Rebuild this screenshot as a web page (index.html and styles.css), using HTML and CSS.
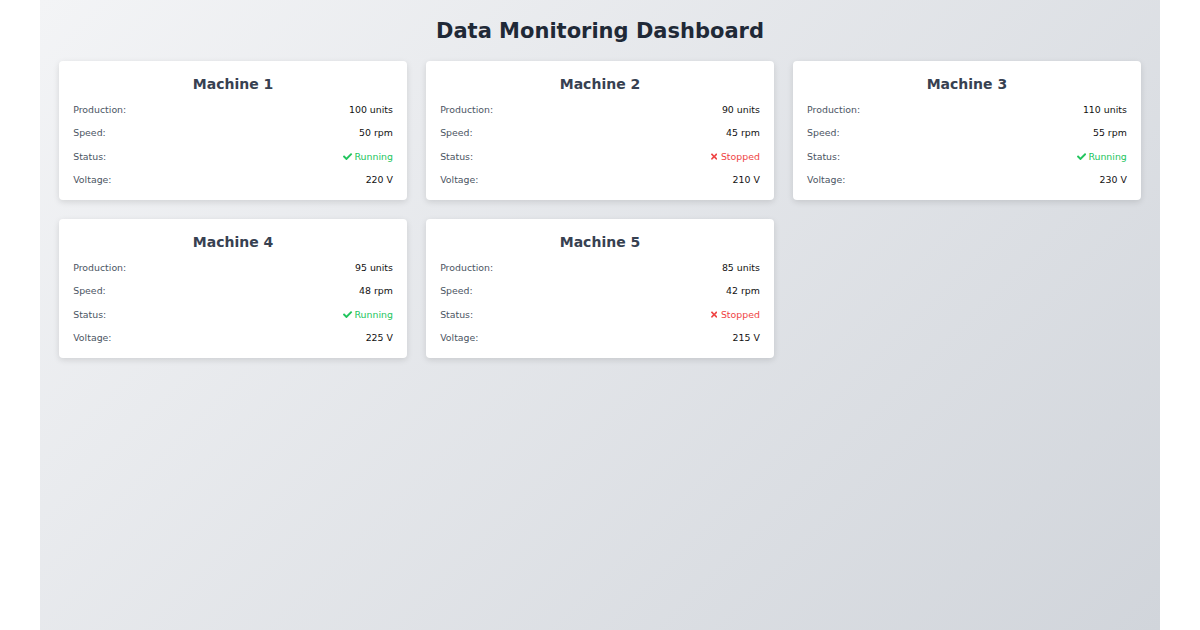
FILE: index.html
```html
<!DOCTYPE html>
<html lang="en">
<head>
<meta charset="utf-8">
<title>Data Monitoring Dashboard</title>
<link rel="stylesheet" href="styles.css">
</head>
<body>
<div class="dashboard">
  <h1 class="page-title">Data Monitoring Dashboard</h1>
  <div class="grid">
    <div class="card">
      <h2 class="card-title">Machine 1</h2>
      <div class="row"><span class="label">Production:</span><span class="value">100 units</span></div>
      <div class="row"><span class="label">Speed:</span><span class="value">50 rpm</span></div>
      <div class="row"><span class="label">Status:</span><span class="value running"><svg class="ic-check" viewBox="0 0 512 512"><path d="M173.898 439.404l-166.4-166.4c-9.997-9.997-9.997-26.206 0-36.204l36.203-36.204c9.997-9.998 26.207-9.998 36.204 0L192 312.69 432.095 72.596c9.997-9.997 26.207-9.997 36.204 0l36.203 36.204c9.997 9.997 9.997 26.206 0 36.204l-294.4 294.401c-9.998 9.997-26.207 9.997-36.204-.001z"/></svg>Running</span></div>
      <div class="row"><span class="label">Voltage:</span><span class="value">220 V</span></div>
    </div>
    <div class="card">
      <h2 class="card-title">Machine 2</h2>
      <div class="row"><span class="label">Production:</span><span class="value">90 units</span></div>
      <div class="row"><span class="label">Speed:</span><span class="value">45 rpm</span></div>
      <div class="row"><span class="label">Status:</span><span class="value stopped"><svg class="ic-times" viewBox="0 0 352 512"><path d="M242.72 256l100.07-100.07c12.28-12.28 12.28-32.19 0-44.48l-22.24-22.24c-12.28-12.28-32.19-12.28-44.48 0L176 189.28 75.93 89.21c-12.28-12.28-32.190-12.28-44.48 0L9.21 111.45c-12.28 12.28-12.28 32.19 0 44.48L109.28 256 9.21 356.07c-12.28 12.28-12.28 32.19 0 44.48l22.24 22.24c12.28 12.28 32.2 12.28 44.48 0L176 322.72l100.07 100.07c12.28 12.28 32.2 12.28 44.48 0l22.24-22.24c12.28-12.28 12.28-32.19 0-44.48L242.72 256z"/></svg>Stopped</span></div>
      <div class="row"><span class="label">Voltage:</span><span class="value">210 V</span></div>
    </div>
    <div class="card">
      <h2 class="card-title">Machine 3</h2>
      <div class="row"><span class="label">Production:</span><span class="value">110 units</span></div>
      <div class="row"><span class="label">Speed:</span><span class="value">55 rpm</span></div>
      <div class="row"><span class="label">Status:</span><span class="value running"><svg class="ic-check" viewBox="0 0 512 512"><path d="M173.898 439.404l-166.4-166.4c-9.997-9.997-9.997-26.206 0-36.204l36.203-36.204c9.997-9.998 26.207-9.998 36.204 0L192 312.69 432.095 72.596c9.997-9.997 26.207-9.997 36.204 0l36.203 36.204c9.997 9.997 9.997 26.206 0 36.204l-294.4 294.401c-9.998 9.997-26.207 9.997-36.204-.001z"/></svg>Running</span></div>
      <div class="row"><span class="label">Voltage:</span><span class="value">230 V</span></div>
    </div>
    <div class="card">
      <h2 class="card-title">Machine 4</h2>
      <div class="row"><span class="label">Production:</span><span class="value">95 units</span></div>
      <div class="row"><span class="label">Speed:</span><span class="value">48 rpm</span></div>
      <div class="row"><span class="label">Status:</span><span class="value running"><svg class="ic-check" viewBox="0 0 512 512"><path d="M173.898 439.404l-166.4-166.4c-9.997-9.997-9.997-26.206 0-36.204l36.203-36.204c9.997-9.998 26.207-9.998 36.204 0L192 312.69 432.095 72.596c9.997-9.997 26.207-9.997 36.204 0l36.203 36.204c9.997 9.997 9.997 26.206 0 36.204l-294.4 294.401c-9.998 9.997-26.207 9.997-36.204-.001z"/></svg>Running</span></div>
      <div class="row"><span class="label">Voltage:</span><span class="value">225 V</span></div>
    </div>
    <div class="card">
      <h2 class="card-title">Machine 5</h2>
      <div class="row"><span class="label">Production:</span><span class="value">85 units</span></div>
      <div class="row"><span class="label">Speed:</span><span class="value">42 rpm</span></div>
      <div class="row"><span class="label">Status:</span><span class="value stopped"><svg class="ic-times" viewBox="0 0 352 512"><path d="M242.72 256l100.07-100.07c12.28-12.28 12.28-32.19 0-44.48l-22.24-22.24c-12.28-12.28-32.19-12.28-44.48 0L176 189.28 75.93 89.21c-12.28-12.28-32.19-12.28-44.48 0L9.21 111.45c-12.28 12.28-12.28 32.19 0 44.48L109.28 256 9.21 356.07c-12.28 12.28-12.28 32.19 0 44.48l22.24 22.24c12.28 12.28 32.2 12.28 44.48 0L176 322.72l100.07 100.07c12.28 12.28 32.2 12.28 44.48 0l22.24-22.24c12.28-12.28 12.28-32.19 0-44.48L242.72 256z"/></svg>Stopped</span></div>
      <div class="row"><span class="label">Voltage:</span><span class="value">215 V</span></div>
    </div>
  </div>
</div>
</body>
</html>
```

FILE: styles.css
```css
html, body {
  margin: 0;
  padding: 0;
  background: #ffffff;
  font-family: "DejaVu Sans", sans-serif;
}

.dashboard {
  width: 1120px;
  min-height: 630px;
  margin: 0 auto;
  box-sizing: border-box;
  padding: 19px 19.2px;
  background: linear-gradient(135deg, #f3f4f6 0%, #d1d5db 100%);
}

.page-title {
  margin: 0 0 17px;
  font-size: 21px;
  line-height: 25px;
  font-weight: bold;
  text-align: center;
  color: #1f2937;
}

.grid {
  display: grid;
  grid-template-columns: repeat(3, 1fr);
  gap: 19.2px;
}

.card {
  background: #ffffff;
  border-radius: 4px;
  box-shadow: 0 2px 6px rgba(0, 0, 0, 0.12);
  padding: 12.5px 14px 8.5px;
}

.card-title {
  margin: 0 0 3.5px;
  font-size: 14px;
  line-height: 21px;
  font-weight: bold;
  text-align: center;
  color: #374151;
}

.row {
  display: flex;
  justify-content: space-between;
  align-items: center;
  font-size: 9.4px;
  line-height: 13.8px;
  padding: 4.8px 0;
}

.label {
  color: #4b5563;
}

.value {
  color: #111111;
  display: flex;
  align-items: center;
}

.running {
  color: #22c55e;
}

.stopped {
  color: #ef4444;
}

.ic-check {
  width: 9.2px;
  height: 9.2px;
  margin-right: 2px;
  fill: #22c55e;
}

.ic-times {
  width: 6.3px;
  height: 9.2px;
  margin-right: 4px;
  fill: #ef4444;
}
```
